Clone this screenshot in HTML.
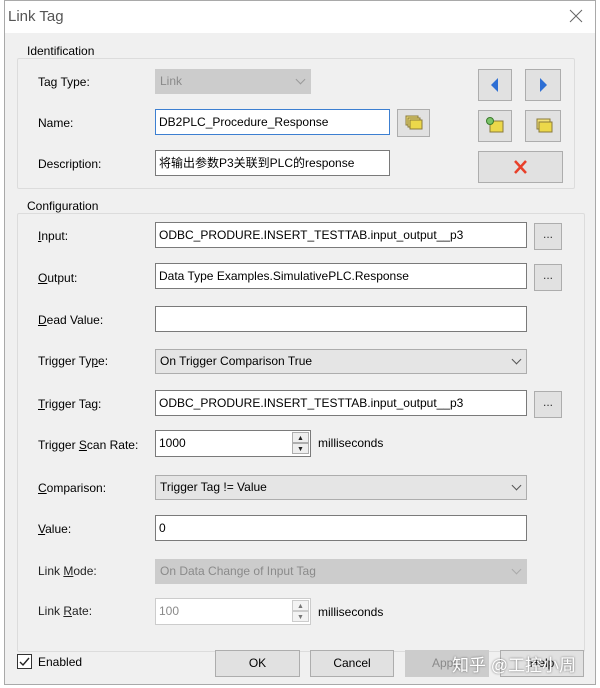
<!DOCTYPE html>
<html><head><meta charset="utf-8"><style>
*{box-sizing:border-box;margin:0;padding:0}
body{width:600px;height:688px;background:#fff;position:relative;overflow:hidden;font-family:"Liberation Sans","Noto Sans CJK SC",sans-serif;font-size:12px;color:#000}
.a{position:absolute}
#win{left:4px;top:0;width:592px;height:685px;background:#f0f0f0;border:1px solid #a9a9a9}
#title{left:5px;top:1px;width:590px;height:32px;background:#fff}
.t{font-size:15px;color:#555}
.grp{border:1px solid #dcdcdc;border-radius:2px}
.gl{background:#f0f0f0;padding:0 3px;color:#000}
.lbl{left:38px}
.fld{background:#fff;border:1px solid #7a7a7a;padding-left:3px;line-height:25px;white-space:nowrap;overflow:hidden}
.cmb{background:#e5e5e5;border:1px solid #adadad;padding-left:4px;line-height:23px}
.dis{background:#cccccc;border:1px solid #cccccc;color:#8a8a8a}
.btn{background:#e1e1e1;border:1px solid #adadad;text-align:center}
.chev{position:absolute;right:6px;top:6px;width:7px;height:7px;border-right:1.3px solid #555;border-bottom:1.3px solid #555;transform:rotate(45deg)}
.dot{font-size:12px;line-height:20px;color:#333}
u{text-decoration:underline}
</style></head><body>
<div id="win" class="a"></div>
<div id="title" class="a"></div>
<div class="a t" style="left:8px;top:8px">Link Tag</div>
<svg class="a" style="left:568px;top:8px" width="16" height="16"><path d="M2 2 L14 14 M14 2 L2 14" stroke="#666" stroke-width="1"/></svg>

<div class="a grp" style="left:17px;top:58px;width:558px;height:131px"></div>
<div class="a gl" style="left:24px;top:44px">Identification</div>
<div class="a lbl" style="top:75px">Tag Type:</div>
<div class="a cmb dis" style="left:155px;top:69px;width:156px;height:25px">Link<span class="chev" style="border-color:#999"></span></div>
<div class="a lbl" style="top:116px">Name:</div>
<div class="a fld" style="left:155px;top:109px;width:235px;height:26px;border-color:#3c7fd1">DB2PLC_Procedure_Response</div>
<div class="a btn" style="left:397px;top:109px;width:33px;height:28px"><svg width="31" height="26"><rect x="8" y="6" width="12" height="9" fill="#f3e27a" stroke="#8a7a3a"/><rect x="10" y="8" width="12" height="9" fill="#f3e27a" stroke="#8a7a3a"/><rect x="12" y="10" width="12" height="9" fill="#ecd84a" stroke="#8a7a3a"/></svg></div>
<div class="a lbl" style="top:157px">Description:</div>
<div class="a fld" style="left:155px;top:150px;width:235px;height:26px">将输出参数P3关联到PLC的response</div>

<div class="a btn" style="left:478px;top:69px;width:34px;height:32px"><svg width="32" height="30"><path d="M19 8 L12 15 L19 22Z" fill="#2e6fd4"/></svg></div>
<div class="a btn" style="left:525px;top:69px;width:36px;height:32px"><svg width="34" height="30"><path d="M14 8 L21 15 L14 22Z" fill="#2e6fd4"/></svg></div>
<div class="a btn" style="left:478px;top:110px;width:34px;height:32px"><svg width="32" height="30"><rect x="11" y="10" width="13" height="11" fill="#ecd84a" stroke="#8a7a3a"/><circle cx="11" cy="10" r="3.5" fill="#7bc36a" stroke="#3a7a2a"/></svg></div>
<div class="a btn" style="left:525px;top:110px;width:36px;height:32px"><svg width="34" height="30"><rect x="11" y="8" width="13" height="10" fill="#f3e27a" stroke="#8a7a3a"/><rect x="13" y="11" width="13" height="10" fill="#ecd84a" stroke="#8a7a3a"/></svg></div>
<div class="a btn" style="left:478px;top:151px;width:85px;height:32px"><svg width="83" height="30"><path d="M36 9 L47 21 M47 9 L36 21" stroke="#e8402a" stroke-width="2.5"/></svg></div>

<div class="a grp" style="left:17px;top:213px;width:568px;height:439px"></div>
<div class="a gl" style="left:24px;top:199px">Configuration</div>

<div class="a lbl" style="top:229px"><u>I</u>nput:</div>
<div class="a fld" style="left:155px;top:222px;width:372px;height:26px">ODBC_PRODURE.INSERT_TESTTAB.input_output__p3</div>
<div class="a btn dot" style="left:534px;top:223px;width:28px;height:27px">...</div>

<div class="a lbl" style="top:271px"><u>O</u>utput:</div>
<div class="a fld" style="left:155px;top:263px;width:372px;height:26px">Data Type Examples.SimulativePLC.Response</div>
<div class="a btn dot" style="left:534px;top:264px;width:28px;height:27px">...</div>

<div class="a lbl" style="top:313px"><u>D</u>ead Value:</div>
<div class="a fld" style="left:155px;top:306px;width:372px;height:26px"></div>

<div class="a lbl" style="top:354px">Trigger Ty<u>p</u>e:</div>
<div class="a cmb" style="left:155px;top:349px;width:372px;height:25px">On Trigger Comparison True<span class="chev"></span></div>

<div class="a lbl" style="top:397px"><u>T</u>rigger Tag:</div>
<div class="a fld" style="left:155px;top:390px;width:372px;height:26px">ODBC_PRODURE.INSERT_TESTTAB.input_output__p3</div>
<div class="a btn dot" style="left:534px;top:391px;width:28px;height:27px">...</div>

<div class="a lbl" style="top:438px">Trigger <u>S</u>can Rate:</div>
<div class="a fld" style="left:155px;top:430px;width:156px;height:27px">1000</div>
<div class="a" style="left:292px;top:432px;width:17px;height:23px;font-size:7px;line-height:11px;text-align:center;color:#222"><div style="border:1px solid #adadad;background:#eee;height:11px">▲</div><div style="border:1px solid #adadad;background:#eee;height:11px">▼</div></div>
<div class="a" style="left:318px;top:436px">milliseconds</div>

<div class="a lbl" style="top:481px"><u>C</u>omparison:</div>
<div class="a cmb" style="left:155px;top:475px;width:372px;height:25px">Trigger Tag != Value<span class="chev"></span></div>

<div class="a lbl" style="top:522px"><u>V</u>alue:</div>
<div class="a fld" style="left:155px;top:515px;width:372px;height:26px">0</div>

<div class="a lbl" style="top:564px;color:#222">Link <u>M</u>ode:</div>
<div class="a cmb dis" style="left:155px;top:559px;width:372px;height:25px">On Data Change of Input Tag<span class="chev" style="border-color:#aaa"></span></div>

<div class="a lbl" style="top:604px;color:#222">Link <u>R</u>ate:</div>
<div class="a fld" style="left:155px;top:598px;width:156px;height:27px;border-color:#ccc;color:#8a8a8a">100</div>
<div class="a" style="left:292px;top:600px;width:17px;height:23px;font-size:7px;line-height:11px;text-align:center;color:#777"><div style="border:1px solid #ccc;background:#f3f3f3;height:11px">▲</div><div style="border:1px solid #ccc;background:#f3f3f3;height:11px">▼</div></div>
<div class="a" style="left:318px;top:605px">milliseconds</div>

<div class="a" style="left:17px;top:654px;width:15px;height:15px;border:1px solid #333;background:#fff"><svg width="13" height="13"><path d="M2 7 L5 10 L11 3" stroke="#222" stroke-width="1.4" fill="none"/></svg></div>
<div class="a" style="left:38px;top:655px">Enabled</div>

<div class="a btn" style="left:215px;top:650px;width:85px;height:27px;line-height:25px">OK</div>
<div class="a btn" style="left:310px;top:650px;width:84px;height:27px;line-height:25px">Cancel</div>
<div class="a btn" style="left:405px;top:650px;width:84px;height:27px;line-height:25px;background:#ccc;border-color:#ccc;color:#8a8a8a">Apply</div>
<div class="a btn" style="left:500px;top:650px;width:84px;height:27px;line-height:25px">Help</div>
<div class="a" style="left:452px;top:651px;font-size:17px;color:#fff;text-shadow:0 0 2px #666">知乎 @工控小周</div>
</body></html>
